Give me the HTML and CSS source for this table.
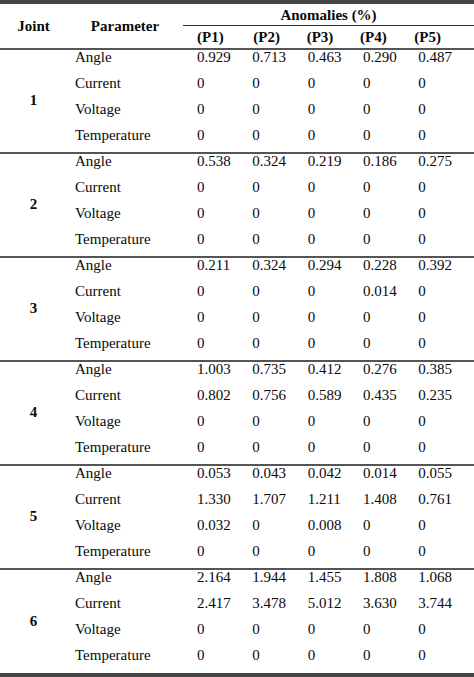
FILE: index.html
```html
<!DOCTYPE html>
<html>
<head>
<meta charset="utf-8">
<link rel="stylesheet" href="styles.css">
</head>
<body>
<table class="tbl">
  <colgroup>
    <col class="c-joint">
    <col class="c-param">
    <col class="c-val">
    <col class="c-val">
    <col class="c-val">
    <col class="c-val">
    <col class="c-last">
  </colgroup>
  <thead>
    <tr class="h1">
      <th class="th-joint" rowspan="2">Joint</th>
      <th class="th-param" rowspan="2">Parameter</th>
      <th class="th-anom" colspan="5">Anomalies (%)</th>
    </tr>
    <tr class="h2">
      <th class="th-p">(P1)</th>
      <th class="th-p">(P2)</th>
      <th class="th-p">(P3)</th>
      <th class="th-p">(P4)</th>
      <th class="th-p">(P5)</th>
    </tr>
  </thead>
  <tbody>
    <tr><td class="joint" rowspan="4">1</td><td class="param">Angle</td><td>0.929</td><td>0.713</td><td>0.463</td><td>0.290</td><td>0.487</td></tr>
    <tr><td class="param">Current</td><td>0</td><td>0</td><td>0</td><td>0</td><td>0</td></tr>
    <tr><td class="param">Voltage</td><td>0</td><td>0</td><td>0</td><td>0</td><td>0</td></tr>
    <tr class="end"><td class="param">Temperature</td><td>0</td><td>0</td><td>0</td><td>0</td><td>0</td></tr>

    <tr><td class="joint" rowspan="4">2</td><td class="param">Angle</td><td>0.538</td><td>0.324</td><td>0.219</td><td>0.186</td><td>0.275</td></tr>
    <tr><td class="param">Current</td><td>0</td><td>0</td><td>0</td><td>0</td><td>0</td></tr>
    <tr><td class="param">Voltage</td><td>0</td><td>0</td><td>0</td><td>0</td><td>0</td></tr>
    <tr class="end"><td class="param">Temperature</td><td>0</td><td>0</td><td>0</td><td>0</td><td>0</td></tr>

    <tr><td class="joint" rowspan="4">3</td><td class="param">Angle</td><td>0.211</td><td>0.324</td><td>0.294</td><td>0.228</td><td>0.392</td></tr>
    <tr><td class="param">Current</td><td>0</td><td>0</td><td>0</td><td>0.014</td><td>0</td></tr>
    <tr><td class="param">Voltage</td><td>0</td><td>0</td><td>0</td><td>0</td><td>0</td></tr>
    <tr class="end"><td class="param">Temperature</td><td>0</td><td>0</td><td>0</td><td>0</td><td>0</td></tr>

    <tr><td class="joint" rowspan="4">4</td><td class="param">Angle</td><td>1.003</td><td>0.735</td><td>0.412</td><td>0.276</td><td>0.385</td></tr>
    <tr><td class="param">Current</td><td>0.802</td><td>0.756</td><td>0.589</td><td>0.435</td><td>0.235</td></tr>
    <tr><td class="param">Voltage</td><td>0</td><td>0</td><td>0</td><td>0</td><td>0</td></tr>
    <tr class="end"><td class="param">Temperature</td><td>0</td><td>0</td><td>0</td><td>0</td><td>0</td></tr>

    <tr><td class="joint" rowspan="4">5</td><td class="param">Angle</td><td>0.053</td><td>0.043</td><td>0.042</td><td>0.014</td><td>0.055</td></tr>
    <tr><td class="param">Current</td><td>1.330</td><td>1.707</td><td>1.211</td><td>1.408</td><td>0.761</td></tr>
    <tr><td class="param">Voltage</td><td>0.032</td><td>0</td><td>0.008</td><td>0</td><td>0</td></tr>
    <tr class="end"><td class="param">Temperature</td><td>0</td><td>0</td><td>0</td><td>0</td><td>0</td></tr>

    <tr><td class="joint last-joint" rowspan="4">6</td><td class="param">Angle</td><td>2.164</td><td>1.944</td><td>1.455</td><td>1.808</td><td>1.068</td></tr>
    <tr><td class="param">Current</td><td>2.417</td><td>3.478</td><td>5.012</td><td>3.630</td><td>3.744</td></tr>
    <tr><td class="param">Voltage</td><td>0</td><td>0</td><td>0</td><td>0</td><td>0</td></tr>
    <tr class="final"><td class="param">Temperature</td><td>0</td><td>0</td><td>0</td><td>0</td><td>0</td></tr>
  </tbody>
</table>
</body>
</html>
```

FILE: styles.css
```css
html, body {
  margin: 0;
  padding: 0;
  background: #ffffff;
}

.tbl {
  width: 474px;
  border-collapse: separate;
  border-spacing: 0;
  table-layout: fixed;
  font-family: "Liberation Serif", "Times New Roman", serif;
  font-size: 15px;
  color: #0a0a0a;
  border-top: 4px solid #454545;
  border-bottom: 4px solid #454545;
}

.c-joint { width: 67px; }
.c-param { width: 116px; }
.c-val { width: 55.33px; }
.c-last { width: 69.68px; }

th, td {
  box-sizing: border-box;
  padding: 0;
  line-height: 14px;
  font-weight: normal;
}

.tbl th {
  font-weight: bold;
}

/* header row 1: y 4..26, line at 25 */
.h1 th {
  height: 22px;
  vertical-align: middle;
}

.th-joint, .th-param {
  text-align: center;
  vertical-align: middle;
  border-bottom: 2px solid #555555;
}

.th-anom {
  text-align: center;
  border-bottom: 1px solid #333333;
}

/* header row 2: y 26..50, line at 48 */
.h2 th {
  height: 24px;
  text-align: left;
  vertical-align: middle;
  border-bottom: 2px solid #555555;
}

.h2 th:nth-child(1) { padding-left: 14px; }
.h2 th:nth-child(2) { padding-left: 15px; }
.h2 th:nth-child(3) { padding-left: 13px; }
.h2 th:nth-child(4) { padding-left: 11px; }
.h2 th:nth-child(5) { padding-left: 10px; }

tbody td {
  height: 26px;
  vertical-align: top;
  padding-left: 14px;
  text-align: left;
}

tbody td.param {
  padding-left: 8px;
}

tbody tr.end td {
  border-bottom: 2px solid #555555;
}

tbody tr.final td {
  height: 25px;
}

tbody td.joint {
  padding: 0 0 2px 0;
  text-align: center;
  vertical-align: middle;
  font-weight: bold;
  border-bottom: 2px solid #555555;
}

tbody td.joint.last-joint {
  border-bottom: none;
}
```
